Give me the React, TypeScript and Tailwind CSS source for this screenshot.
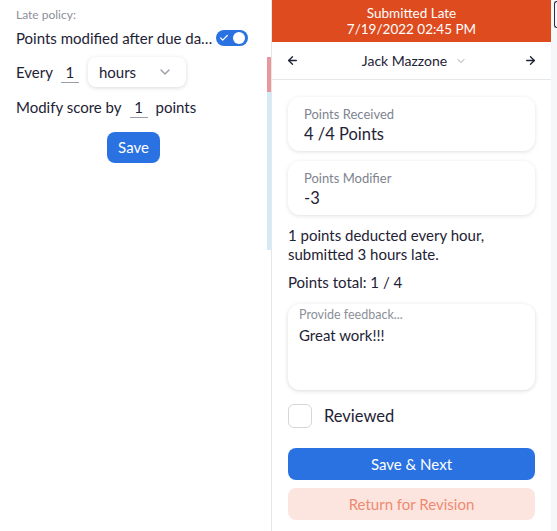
import React, { useState } from "react";
import { ArrowLeft, ArrowRight, ChevronDown, Check } from "lucide-react";

const font = { fontFamily: '"Segoe UI", Lato, "Noto Sans", sans-serif' };

const LatePolicy: React.FC = () => {
  const [enabled] = useState(true);
  return (
    <div className="w-[267px] shrink-0 bg-white px-4 pt-[7px] text-[#1e2235]">
      <div className="text-[12px] leading-4 text-[#8c8f99]">Late policy:</div>
      <div className="mt-[5px] flex items-center">
        <span className="max-w-[198px] truncate text-[15px] leading-5">Points modified after due date</span>
        <div
          className={`ml-[2px] flex h-[16px] w-[32px] shrink-0 items-center justify-between rounded-full px-[3px] ${
            enabled ? "bg-[#2a72e1]" : "bg-gray-300"
          }`}
        >
          <Check className="h-[10px] w-[10px] text-white" strokeWidth={3} />
          <div className="h-[12px] w-[12px] rounded-full bg-white" />
        </div>
      </div>
      <div className="mt-[9px] flex items-center text-[15px]">
        <span>Every</span>
        <div className="ml-[8px] w-[18px] border-b border-[#9a9ca6] text-center leading-5">1</div>
        <div className="ml-[9px] flex h-[30px] w-[98px] items-center justify-between rounded-lg bg-white pl-[11px] pr-[13px] shadow-[0_1px_4px_rgba(0,0,0,0.15)]">
          <span>hours</span>
          <ChevronDown className="h-4 w-4 text-[#9a9ca6]" />
        </div>
      </div>
      <div className="mt-[9px] flex items-center text-[15px]">
        <span>Modify score by</span>
        <div className="ml-[8px] w-[18px] border-b border-[#9a9ca6] text-center leading-5">1</div>
        <span className="ml-[8px]">points</span>
      </div>
      <div className="mt-[13px] flex justify-center">
        <button className="h-[31px] w-[53px] rounded-lg bg-[#2a72e1] text-[15px] text-white">Save</button>
      </div>
    </div>
  );
};

const Card: React.FC<{ label: string; value: string }> = ({ label, value }) => (
  <div className="rounded-xl bg-white px-4 pb-[6px] pt-[8px] shadow-[0_1px_4px_rgba(0,0,0,0.12)]">
    <div className="text-[13px] leading-[18px] text-[#80838f]">{label}</div>
    <div className="text-[16.5px] leading-[22px] text-[#1e2235]">{value}</div>
  </div>
);

const GradingPanel: React.FC = () => {
  const [reviewed, setReviewed] = useState(false);
  return (
    <div className="flex w-[280px] shrink-0 flex-col border-l border-[#e6e7ea] bg-white text-[#1e2235]">
      <div className="flex h-[42px] flex-col items-center justify-center bg-[#de4b1e] text-[13.5px] leading-4 text-white">
        <div>Submitted Late</div>
        <div>7/19/2022 02:45 PM</div>
      </div>
      <div className="flex h-[38px] items-center justify-between border-b border-[#e6e7ea] px-[14px]">
        <ArrowLeft className="h-[13px] w-[13px]" strokeWidth={2.5} />
        <div className="flex items-center gap-[8px] pl-[6px] text-[14px]">
          Jack Mazzone
          <ChevronDown className="h-[12px] w-[12px] text-[#a0a2ab]" />
        </div>
        <ArrowRight className="h-[13px] w-[13px]" strokeWidth={2.5} />
      </div>
      <div className="flex flex-col px-[16px] pt-[17px]">
        <Card label="Points Received" value="4 /4 Points" />
        <div className="h-[10px]" />
        <Card label="Points Modifier" value="-3" />
        <div className="mt-[11px] text-[15px] leading-[19px]">
          1 points deducted every hour,
          <br />
          submitted 3 hours late.
        </div>
        <div className="mt-[9px] text-[15px] leading-[19px]">Points total: 1 / 4</div>
        <div className="mt-[12px] h-[86px] rounded-xl bg-white px-[11px] pt-[2px] shadow-[0_1px_4px_rgba(0,0,0,0.15)]">
          <div className="text-[12.5px] leading-[18px] text-[#8c8f99]">Provide feedback...</div>
          <div className="text-[15px] leading-[22px]">Great work!!!</div>
        </div>
        <label className="mt-[14px] flex items-center gap-[12px]">
          <button
            onClick={() => setReviewed(!reviewed)}
            className="h-[24px] w-[24px] rounded-md border border-[#d5d6da] bg-white"
          />
          <span className="text-[16.5px]">Reviewed</span>
        </label>
        <button className="mt-[19px] h-[32px] rounded-lg bg-[#2a72e1] text-[15px] text-white">Save &amp; Next</button>
        <button className="mt-[8px] h-[32px] rounded-lg bg-[#fde5df] text-[15px] text-[#ee8a72]">
          Return for Revision
        </button>
      </div>
    </div>
  );
}

export default function App() {
  return (
    <div className="flex h-[531px] w-[557px] overflow-hidden bg-white" style={font}>
      <LatePolicy />
      {/* sliver of content behind the panel */}
      <div className="flex w-[4px] shrink-0 flex-col pt-[57px]">
        <div className="h-[35px] bg-[#e8979a]" />
        <div className="h-[158px] bg-[#d3eaf7]" />
      </div>
      <GradingPanel />
      <div className="flex-1 bg-[#f6f7f9] pt-[1px]">
        <div className="ml-[3px] h-[27px] rounded-l-md border border-r-0 border-[#2a2f45]" />
      </div>
    </div>
  );
}
